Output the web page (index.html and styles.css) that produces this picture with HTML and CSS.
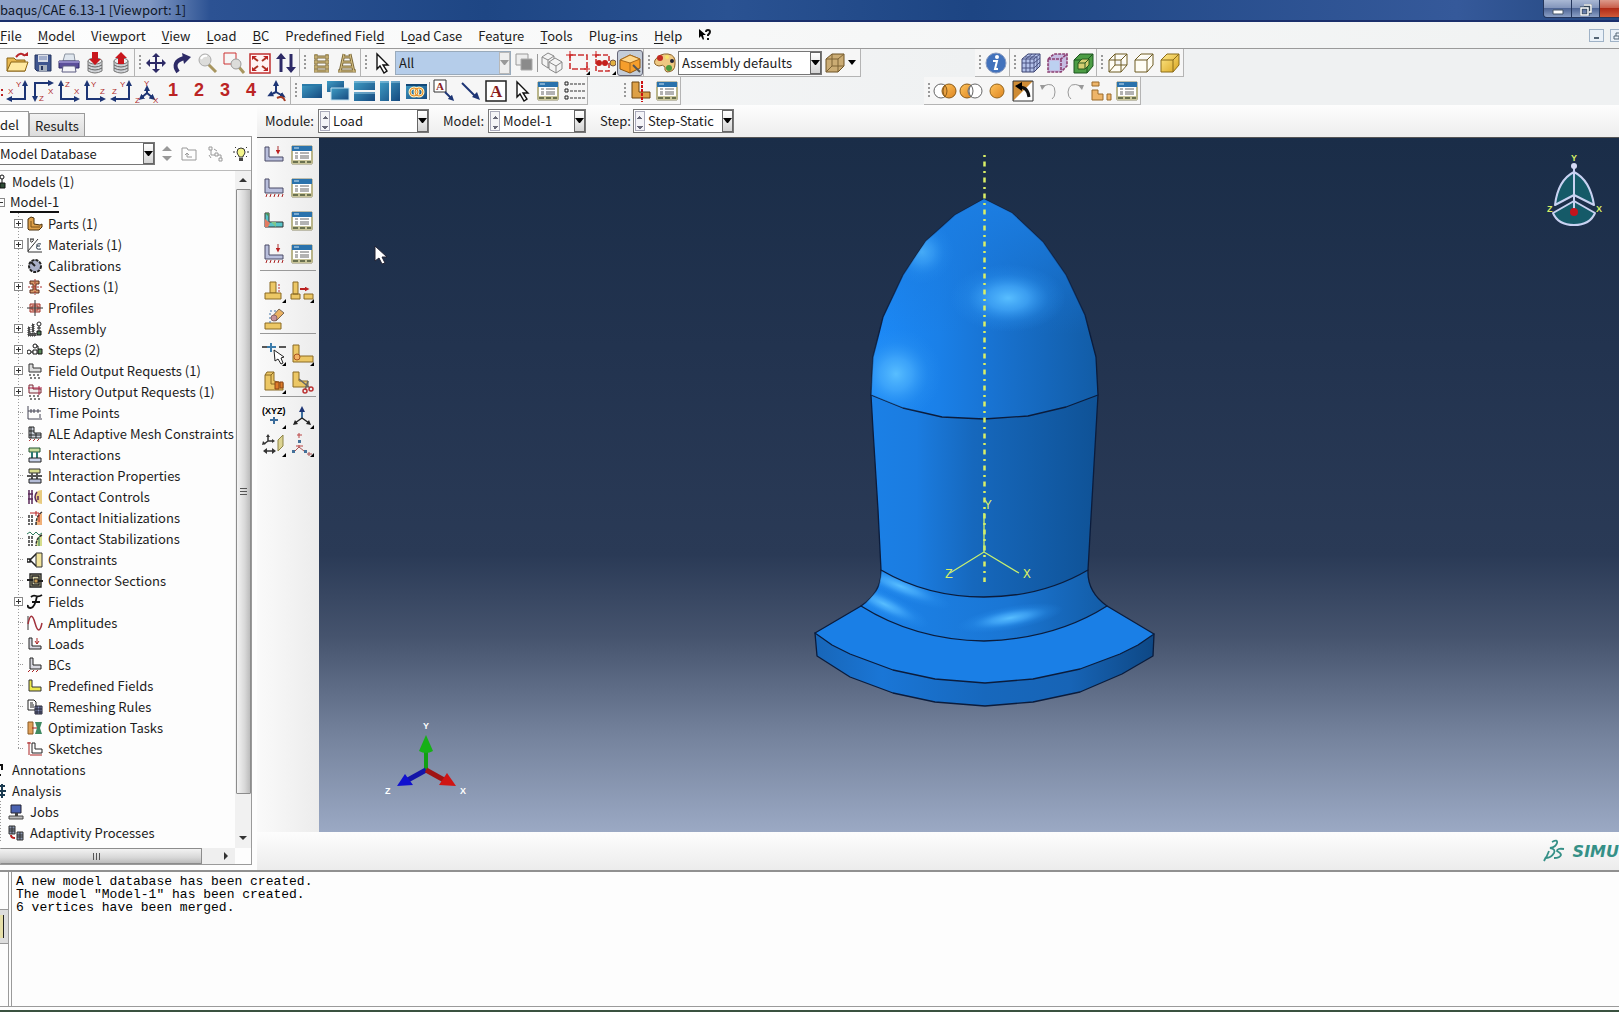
FILE: index.html
```html
<!DOCTYPE html>
<html lang="en">
<head>
  <meta charset="UTF-8" />
  <title>Abaqus/CAE 6.13-1 [Viewport: 1]</title>
  <meta name="viewport" content="width=device-width, initial-scale=1.0" />
  <link rel="stylesheet" href="styles.css">
</head>
<body>
<!-- shared paints and arrow heads -->
<svg class="sprite" aria-hidden="true">
  <defs>
    <linearGradient id="gBlue" x1="0" y1="0" x2="1" y2="1"><stop offset="0" stop-color="#3f9cc4"/><stop offset="1" stop-color="#164a80"/></linearGradient>
    <linearGradient id="gGold" x1="0" y1="0" x2="1" y2="1"><stop offset="0" stop-color="#ffe98a"/><stop offset="1" stop-color="#d9a520"/></linearGradient>
    <linearGradient id="gOrange" x1="0" y1="0" x2="1" y2="1"><stop offset="0" stop-color="#ffc45c"/><stop offset="1" stop-color="#dd8420"/></linearGradient>
    <marker id="mBlue" viewBox="0 0 6 6" refX="3" refY="3" markerWidth="6" markerHeight="6" markerUnits="userSpaceOnUse" orient="auto-start-reverse"><path d="M0 0L6 3L0 6z" fill="#1d3575"/></marker>
    <marker id="mRed" viewBox="0 0 6 6" refX="3" refY="3" markerWidth="5" markerHeight="5" markerUnits="userSpaceOnUse" orient="auto-start-reverse"><path d="M0 0L6 3L0 6z" fill="#b22"/></marker>
  </defs>
</svg>
<!-- icon sprite -->
<svg class="icons" aria-hidden="true">
  <symbol id="open" viewBox="0 0 24 24"><path d="M2 20V7h7l2 2h9v11z" fill="#e8b850" stroke="#8a6416"/><path d="M2 20L6 11H23L20 20z" fill="#ffe9a0" stroke="#8a6416"/><path d="M11 6Q16 0 20 5" fill="none" stroke="#b8252a" stroke-width="2"/><path d="M17 5h6v-4z" fill="#b8252a"/></symbol>
  <symbol id="save" viewBox="0 0 24 24"><path d="M4 4H20V20H6L4 18z" fill="#3e548e" stroke="#24345f"/><path d="M7 4h10v7H7z" fill="#d9dde6"/><path d="M8 6h8M8 8h8" stroke="#6b7fb0"/><path d="M8 14h8v6H8z" fill="#a6afbd"/><path d="M10 15h2v4h-2z" fill="#24345f"/></symbol>
  <symbol id="print" viewBox="0 0 24 24"><path d="M6 10L8 3H17L18 10z" fill="#dfe6ee" stroke="#8b93a0"/><path d="M2 10h20v7H2z" fill="#5b4e9a" stroke="#2f2a66"/><path d="M2 10h20v2H2z" fill="#8e84c4"/><path d="M6 15h12l1 6H5z" fill="#f4f4f8" stroke="#5b5b80"/></symbol>
  <symbol id="dbdown" viewBox="0 0 24 24"><path d="M5 10v10q7 4 14 0V10z" fill="#cfd2d6" stroke="#777"/><path d="M5 14q7 4 14 0M5 17q7 4 14 0" fill="none" stroke="#666"/><ellipse cx="12" cy="10" rx="7" ry="3" fill="#eceeee" stroke="#777"/><path d="M9 1h6v7h3l-6 6-6-6h3z" fill="#c8161d"/></symbol>
  <symbol id="dbup" viewBox="0 0 24 24"><path d="M5 10v10q7 4 14 0V10z" fill="#cfd2d6" stroke="#777"/><path d="M5 14q7 4 14 0M5 17q7 4 14 0" fill="none" stroke="#666"/><ellipse cx="12" cy="10" rx="7" ry="3" fill="#eceeee" stroke="#777"/><path d="M9 13h6V7h3l-6-6-6 6h3z" fill="#c8161d"/></symbol>
  <symbol id="pan" viewBox="0 0 24 24"><path d="M12 4V20M4 12H20" stroke="#2d2a66" stroke-width="2"/><path d="M12 2l4 4H8zM12 22l4-4H8zM2 12l4-4v8zM22 12l-4-4v8z" fill="#2d2a66"/></symbol>
  <symbol id="rotate" viewBox="0 0 24 24"><path d="M8 21Q1 11 14 7" fill="none" stroke="#2d2a66" stroke-width="4"/><path d="M12 2L21 6L14 13z" fill="#2d2a66"/></symbol>
  <symbol id="magnify" viewBox="0 0 24 24"><path d="M12 13L20 21" stroke="#a89660" stroke-width="3"/><circle cx="9" cy="9" r="6" fill="#dcdcda" stroke="#aaa"/><path d="M5 8q2-4 6-3" stroke="#fff" stroke-width="2" fill="none"/></symbol>
  <symbol id="boxzoom" viewBox="0 0 24 24"><path d="M2 2h12v11H2z" fill="none" stroke="#c33"/><path d="M16 15L22 22" stroke="#a89660" stroke-width="3"/><circle cx="14" cy="13" r="5" fill="#dcdcda" stroke="#999"/></symbol>
  <symbol id="fit" viewBox="0 0 24 24"><path d="M2 3h20v19H2z" fill="#fff4f4" stroke="#c03030" stroke-width="1.5"/><path d="M10 10L6 7M14 10l4-3M10 15l-4 3M14 15l4 3" stroke="#a32" stroke-width="2"/><path d="M4 5h5L4 9zM20 5v4l-5-4zM4 20v-4l5 4zM20 20h-5l5-4z" fill="#b22"/></symbol>
  <symbol id="cycle" viewBox="0 0 24 24"><path d="M7 5V21M17 3V19" stroke="#2d2a66" stroke-width="3"/><path d="M7 2l5 6H2zM17 22l5-6H12z" fill="#2d2a66"/></symbol>
  <symbol id="parallel" viewBox="0 0 24 24"><path d="M7 3V21M18 3V21M5 6h15M5 11h15M5 16h15M5 20h15" stroke="#7a683a" stroke-width="3"/><path d="M7 3V21M18 3V21M5 6h15M5 11h15M5 16h15M5 20h15" stroke="#d9c284"/></symbol>
  <symbol id="perspective" viewBox="0 0 24 24"><path d="M9 3L5 21M15 3L19 21M8 6h8M7 11h10M6 16h12M3 20h18" stroke="#7a683a" stroke-width="3"/><path d="M9 3L5 21M15 3L19 21M8 6h8M7 11h10M6 16h12M3 20h18" stroke="#d9c284"/></symbol>
  <symbol id="cursor" viewBox="0 0 24 24"><path d="M7 3V18L10 15L14 22L17 20L13 14H18z" fill="#fff" stroke="#111" stroke-width="1.4"/></symbol>
  <symbol id="stack" viewBox="0 0 24 24"><path d="M4 3h12v11H4z" fill="#eee" stroke="#999"/><path d="M9 8h11v11H9z" fill="#8b8b8b" stroke="#aaa"/></symbol>
  <symbol id="wirecubes" viewBox="0 0 24 24"><g fill="#f4f4f4" stroke="#888"><path d="M2 6l6-4 6 3v8l-6 4-6-4z"/><path d="M2 6l6 3 6-4M8 9v8"/><path d="M9 11l6-4 7 4v7l-6 4-7-4z"/><path d="M9 11l7 4 6-4M16 15v7"/></g></symbol>
  <symbol id="selbox" viewBox="0 0 24 24"><path d="M4 4H21V18H4z" fill="none" stroke="#c33" stroke-width="1.6" stroke-dasharray="6 2"/><path d="M0 4h7M4 0v7M18 18h6M21 15v6" stroke="#c22"/><path d="M24 20v4h-4z"/></symbol>
  <symbol id="seldots" viewBox="0 0 24 24"><path d="M4 4H17V20H4z" fill="none" stroke="#c33" stroke-width="1.6" stroke-dasharray="5 2"/><path d="M0 4h7M4 0v7" stroke="#c22"/><circle cx="7" cy="12" r="3" fill="#c4201c"/><circle cx="13" cy="12" r="3" fill="#c4201c"/><circle cx="21" cy="12" r="3" fill="#e2b040" stroke="#754"/><path d="M24 20v4h-4z"/></symbol>
  <symbol id="solidcube" viewBox="0 0 24 24"><path d="M2 9L12 4L22 8V17L12 22L2 18z" fill="#f59e2c" stroke="#8c5510"/><path d="M2 9L12 12L22 8L12 4z" fill="#ffd68a" stroke="#a9691a"/><path d="M12 12V22" stroke="#a9691a"/><path d="M15 14l7 7" stroke="#555" stroke-width="2"/></symbol>
  <symbol id="palette" viewBox="0 0 24 24"><path d="M2 9Q7 2 15 3T22 13Q22 21 14 21Q11 20 12 16Q10 13 6 15Q0 14 2 9z" fill="#efc882" stroke="#8a6228"/><circle cx="7" cy="7" r="3" fill="#c22a22"/><circle cx="14" cy="6" r="2" fill="#f7e36a"/><circle cx="19" cy="10" r="2" fill="#223"/><circle cx="16" cy="17" r="3" fill="#4b9a3c"/></symbol>
  <symbol id="tancube" viewBox="0 0 24 24"><path d="M3 8L9 3H21V15L15 21H3z" fill="#cbac74" stroke="#6d5325"/><path d="M3 8H15L21 3M15 8V21M9 3V15H21M9 15L3 21" fill="none" stroke="#7d6335"/></symbol>
  <symbol id="info" viewBox="0 0 24 24"><circle cx="12" cy="12" r="10" fill="#4272bc" stroke="#8a9cc0"/><circle cx="13" cy="6" r="2" fill="#fff"/><path d="M9 10h4l-2 8h3" fill="none" stroke="#fff" stroke-width="2"/></symbol>
  <symbol id="meshcube" viewBox="0 0 24 24"><path d="M3 8L9 3H21V15L15 21H3z" fill="#b4c2ea" stroke="#39406e"/><path d="M3 8H15L21 3M15 8V21M7 8V21M11 8V21M3 12H15L21 7M3 17H15L21 11M6 6H18V18M7 8l6-5M11 8l6-5" fill="none" stroke="#4a5282"/></symbol>
  <symbol id="nodecube" viewBox="0 0 24 24"><path d="M3 8L9 3H22V15L16 21H3z" fill="#c6bce2" stroke="#8c3f72" stroke-dasharray="3 1" stroke-width="1.6"/><path d="M5 10h9v9H5z" fill="#bcd0f0"/><path d="M3 8H16L22 3M16 8V21" fill="none" stroke="#8c3f72" stroke-dasharray="3 1" stroke-width="1.6"/></symbol>
  <symbol id="greencube" viewBox="0 0 24 24"><path d="M3 9L9 3H22V15L16 22H3z" fill="#4c9d45" stroke="#1c5420"/><path d="M3 9H16L22 3M16 9V22" fill="none" stroke="#1c5420"/><path d="M7 12L11 8H18V14L14 18H7z" fill="#d5cf72" stroke="#2a5a1e"/><path d="M7 12h7v6M14 12l4-4" fill="none" stroke="#2a5a1e"/></symbol>
  <symbol id="wirecube" viewBox="0 0 24 24"><path d="M3 9L9 3H21V14L15 21H3zM3 9H15L21 3M15 9V21M9 3V14H21M9 14L3 21" fill="#fffdf4" stroke="#6d5a22"/></symbol>
  <symbol id="hidcube" viewBox="0 0 24 24"><path d="M3 9L9 3H21V14L15 21H3zM3 9H15L21 3M15 9V21" fill="#fffdf4" stroke="#6d5a22"/></symbol>
  <symbol id="goldcube" viewBox="0 0 24 24"><path d="M3 9L9 3H21V14L15 21H3z" fill="url(#gGold)" stroke="#8a6c1a"/><path d="M3 9H15L21 3M15 9V21" fill="none" stroke="#8a6c1a"/></symbol>

  <symbol id="vcut" viewBox="0 0 4 24"><path d="M1 10h2v2H1zM1 15h2v2H1z" fill="#b22"/></symbol>
  <symbol id="v1" viewBox="0 0 24 24"><path d="M20 4V20H4" class="axis"/><text x="11" y="8" class="axl">Y</text><text x="3" y="15" class="axl">X</text></symbol>
  <symbol id="v2" viewBox="0 0 24 24"><path d="M20 4H4V20" class="axis"/><text x="17" y="15" class="axl">X</text><text x="8" y="22" class="axl">Z</text></symbol>
  <symbol id="v3" viewBox="0 0 24 24"><path d="M4 4V20H20" class="axis"/><text x="8" y="8" class="axl">Z</text><text x="17" y="15" class="axl">X</text></symbol>
  <symbol id="v4" viewBox="0 0 24 24"><path d="M4 4V20H20" class="axis"/><text x="8" y="8" class="axl">Y</text><text x="17" y="15" class="axl">Z</text></symbol>
  <symbol id="v5" viewBox="0 0 24 24"><path d="M20 4V20H4" class="axis"/><text x="11" y="8" class="axl">Y</text><text x="3" y="15" class="axl">Z</text></symbol>
  <symbol id="v6" viewBox="0 0 24 24"><path d="M12 14V9" class="axis end"/><path d="M12 14L6 19" class="axis end"/><path d="M12 14L18 19" class="axis end"/><text x="9" y="7" class="axl">Y</text><text x="0" y="24" class="axl">Z</text><text x="18" y="24" class="axl">X</text></symbol>
  <symbol id="vrot" viewBox="0 0 24 24"><path d="M11 13V4" class="axis end"/><path d="M11 13L5 16" class="axis end"/><path d="M11 13L18 17" class="axis end"/><path d="M12 19q6-3 8 3" fill="none" stroke="#a43a22" stroke-width="2"/></symbol>

  <symbol id="win" viewBox="0 0 24 24"><path d="M2 5h20v14H2z" fill="url(#gBlue)"/><path d="M2 5h20v2H2z" fill="#2a7aa8"/></symbol>
  <symbol id="wincasc" viewBox="0 0 24 24"><path d="M1 2h17v11H1z" fill="url(#gBlue)"/><path d="M5 9h18v12H5z" fill="url(#gBlue)" stroke="#bfe0f0"/></symbol>
  <symbol id="winhor" viewBox="0 0 24 24"><path d="M2 2h21v9H2zM2 13h21v9H2z" fill="url(#gBlue)"/><path d="M2 3h21M2 14h21" stroke="#9ccbe4"/></symbol>
  <symbol id="winver" viewBox="0 0 24 24"><path d="M2 2h9v20H2zM13 2h9v20h-9z" fill="url(#gBlue)"/><path d="M2 3h9M13 3h9" stroke="#9ccbe4"/></symbol>
  <symbol id="winlink" viewBox="0 0 24 24"><path d="M2 5h21v15H2z" fill="url(#gBlue)"/><path d="M2 5h21v2H2z" fill="#114877"/><g fill="none" stroke="#fff0c0" stroke-width="3"><circle cx="10" cy="13" r="4"/><circle cx="15" cy="13" r="4"/></g><g fill="none" stroke="#e58a22"><circle cx="10" cy="13" r="4"/><circle cx="15" cy="13" r="4"/></g></symbol>
  <symbol id="textarrow" viewBox="0 0 24 24"><path d="M2 1h12v12H2z" fill="#fff" stroke="#333"/><text x="4" y="11" class="serif" font-size="11">A</text><path d="M13 13L20 20" class="axis end"/></symbol>
  <symbol id="arrow" viewBox="0 0 24 24"><path d="M4 4L18 18" stroke="#1d3575" stroke-width="2"/><path d="M22 21l-8-3 5-5z" fill="#1d3575"/></symbol>
  <symbol id="text" viewBox="0 0 24 24"><path d="M2 2h20v20H2z" fill="#fff" stroke="#222" stroke-width="1.5"/><text x="6" y="18" class="serif" font-size="17">A</text></symbol>
  <symbol id="manager" viewBox="0 0 24 24"><path d="M2 3h20v18H2z" fill="#fff" stroke="#8b8868"/><path d="M2 3h20v5H2z" fill="#2a72ac"/><path d="M4 5h5" stroke="#cfe5f4"/><path d="M2 17h20v4H2z" fill="#c9c59a"/><path d="M3 19h5M10 19h5M17 19h4" stroke="#6a7150" stroke-width="2"/><path d="M5 10h3M5 13h3M5 15h3M10 10h9M10 13h9M10 15h9" stroke="#666"/><path d="M2 8v12M22 8v12" stroke="#b9b58a" stroke-width="2"/></symbol>
  <symbol id="list" viewBox="0 0 24 24"><path d="M3 3h3v3H3zM3 10h3v3H3zM3 17h3v3H3z" fill="none" stroke="#222"/><path d="M8 5h15M8 12h15M8 19h15" stroke="#333" stroke-dasharray="3 1"/></symbol>
  <symbol id="partcut" viewBox="0 0 24 24"><path d="M3 3h7v10h11v6H3z" fill="#dda047" stroke="#6d4510"/><path d="M13 2V23" stroke="#c11" stroke-width="2" stroke-dasharray="3 1"/></symbol>
  <symbol id="unite" viewBox="0 0 24 24"><circle cx="8" cy="12" r="7" fill="#fff" stroke="#666"/><circle cx="16" cy="12" r="7" fill="url(#gOrange)" stroke="#8a5a18"/><path d="M12 6Q16 12 12 18Q8 12 12 6z" fill="#e9a040" stroke="#8a5a18"/></symbol>
  <symbol id="subtract" viewBox="0 0 24 24"><circle cx="8" cy="12" r="7" fill="url(#gOrange)" stroke="#8a5a18"/><circle cx="16" cy="12" r="7" fill="#fff" stroke="#666"/><path d="M12 6Q16 12 12 18Q8 12 12 6z" fill="#fff" stroke="#666"/></symbol>
  <symbol id="disk" viewBox="0 0 24 24"><circle cx="12" cy="12" r="7" fill="url(#gOrange)" stroke="#94641c"/></symbol>
  <symbol id="swap" viewBox="0 0 24 24"><path d="M2 2h20v20H2z" fill="#fff"/><path d="M2 2h20L2 22z" fill="#cf8c35"/><path d="M2 2h20v20H2z" fill="none" stroke="#333"/><path d="M8 8q9 0 10 10" fill="none" stroke="#111" stroke-width="3"/><path d="M4 7l7-4v9z"/></symbol>
  <symbol id="undo" viewBox="0 0 24 24"><path d="M6 7Q18 2 18 13Q18 18 15 20" fill="none" stroke="#999"/><path d="M3 6h6l-4 5z" fill="#999"/></symbol>
  <symbol id="redo" viewBox="0 0 24 24"><path d="M18 7Q6 2 5 13Q5 18 8 20" fill="none" stroke="#999"/><path d="M21 6h-6l4 5z" fill="#999"/></symbol>
  <symbol id="parts3" viewBox="0 0 24 24"><g fill="#eeb56a" stroke="#9a6a2a"><path d="M3 3h7v4H3z"/><path d="M3 11h6v4h5v6H3z"/><path d="M18 15h4v6h-4z"/></g></symbol>

  <symbol id="tload" viewBox="0 0 24 24"><path d="M3 4h4v10h14v4H3z" class="part"/><path d="M16 3V9" stroke="#a33" marker-end="url(#mRed)"/></symbol>
  <symbol id="tbc" viewBox="0 0 24 24"><path d="M3 3h4v9h14v5H3z" class="part"/><path d="M4 21l1-3M8 21l1-3M12 21l1-3M16 21l1-3M20 21l1-3" stroke="#a22"/></symbol>
  <symbol id="tfield" viewBox="0 0 24 24"><path d="M3 4h4v9h14v5H3z" fill="#58c4c8" stroke="#333"/><path d="M3 10L8 14L6 18H3z" fill="#e37b62"/><path d="M3 4h4v4z" fill="#4d8f5a"/><path d="M9 13h5v5z" fill="#7fc68a"/></symbol>
  <symbol id="tcase" viewBox="0 0 24 24"><path d="M3 3h4v10h14v4H3z" class="part"/><path d="M16 2V8" stroke="#a33" marker-end="url(#mRed)"/><path d="M4 21l1-3M8 21l1-3M12 21l1-3M16 21l1-3M20 21l1-3" stroke="#a22"/></symbol>
  <symbol id="tpart" viewBox="0 0 24 24"><path d="M8 3h6v11H8z" class="gold"/><path d="M3 14h16v6H3z" class="gold"/><path d="M17 5v9" stroke="#b33" stroke-dasharray="2 1"/><path d="M24 20v4h-4z"/></symbol>
  <symbol id="tmove" viewBox="0 0 24 24"><path d="M3 3h5v12H3zM1 15h9v5H1zM14 15h9v5h-9z" class="gold"/><path d="M10 10H17" stroke="#b22" stroke-width="2" marker-end="url(#mRed)"/><path d="M24 20v4h-4z"/></symbol>
  <symbol id="terase" viewBox="0 0 24 24"><path d="M3 16h16v6H3z" class="gold"/><path d="M8 16V4h6" fill="none" stroke="#47a" stroke-dasharray="2 2"/><path d="M9 11L17 2L22 6L14 14z" fill="#eab262" stroke="#765"/><circle cx="12" cy="11" r="3" fill="#c5919a" stroke="#866"/></symbol>
  <symbol id="tpick" viewBox="0 0 24 24"><path d="M0 5h6M17 5h7" stroke="#222" stroke-width="1.5"/><path d="M9 1v9M5 5h9" stroke="#3b7cab" stroke-width="2"/><path d="M12 8l1 11 3-2 3 5 2-1-2-5 3-1z" fill="#fff" stroke="#222"/><path d="M24 20v4h-4z"/></symbol>
  <symbol id="thole" viewBox="0 0 24 24"><path d="M3 3h6v11h14v6H3z" class="gold"/><circle cx="7" cy="15" r="3" fill="#f5b264" stroke="#a52"/><path d="M24 20v4h-4z"/></symbol>
  <symbol id="tfill" viewBox="0 0 24 24"><path d="M3 5l2-3h7v9l9 2v7H3z" class="gold"/><path d="M3 5h6v9h5M9 5l3-3" fill="none" stroke="#8a6a24"/><path d="M13 12h4v7h-4zM18 12h3v6h-3z" fill="#dd7d2a" stroke="#8a4516"/><path d="M24 20v4h-4z"/></symbol>
  <symbol id="tcut" viewBox="0 0 24 24"><path d="M3 2h6v9h9v6H3z" class="gold"/><path d="M9 9L20 18M18 11L15 20" stroke="#666" stroke-width="1.5"/><g fill="none" stroke="#b33" stroke-width="1.5"><circle cx="15" cy="21" r="2"/><circle cx="21" cy="19" r="2"/></g></symbol>
  <symbol id="txyz" viewBox="0 0 24 24"><text x="0" y="9" font-size="9" font-weight="700">(XYZ)</text><path d="M12 12v7M8 15h8" stroke="#3b6c9b" stroke-width="2"/><path d="M24 20v4h-4z"/></symbol>
  <symbol id="ttriad" viewBox="0 0 24 24"><path d="M12 14V4" stroke="#3d6f9e" stroke-width="2" marker-end="url(#mBlue)"/><path d="M12 13L5 18M12 13L19 18" stroke="#222" stroke-width="1.5"/><path d="M3 20l5-1-3-4zM21 20l-5-1 3-4z" fill="#222"/><path d="M24 20v4h-4z"/></symbol>
  <symbol id="tplane" viewBox="0 0 24 24"><path d="M6 8V3M6 8L2 11M6 8h5M4 18h7" stroke="#333" stroke-width="1.5"/><path d="M1 18l4-3v6zM14 18l-4-3v6zM6 1l2 3H4zM13 8l-3-2v4zM0 12l1-4 3 3z" fill="#333"/><path d="M16 7L21 2V13L16 18z" fill="#dcd391" stroke="#8d8446"/><path d="M24 20v4h-4z"/></symbol>
  <symbol id="tcsys" viewBox="0 0 24 24"><path d="M9 0v5M7 2h5M9 12v3M6 13h7" stroke="#b44"/><path d="M8 7h3v3H8zM2 17h3v3H2zM14 17h3v3h-3z" fill="#44719a"/><path d="M5 18l4-4 5 4M17 21h5M19 19v4" stroke="#a55" fill="none"/><path d="M24 20v4h-4z"/></symbol>

  <symbol id="bulb" viewBox="0 0 18 18"><path d="M5 7a4 4 0 118 0q0 2-2 4v1H7v-1Q5 9 5 7z" fill="#f4f58a" stroke="#333"/><path d="M7 13h4v3H7z" fill="#444"/><path d="M1 7h2M15 7h2M3 2l1 1M15 2l-1 1M3 12l1-1M15 12l-1-1" stroke="#333"/></symbol>
  <symbol id="folderup" viewBox="0 0 18 18"><path d="M2 5V3h5l1 2h8v10H2z" fill="none" stroke="#999"/><path d="M7 12V8M5 10l2-2 2 2M7 12h5" fill="none" stroke="#999"/></symbol>
  <symbol id="nodes" viewBox="0 0 18 18"><g fill="none" stroke="#999"><path d="M3 2h3v3H3zM9 8h3v3H9zM13 13h3v3h-3zM5 5v5h4M12 10h3v3M8 4l3 2M3 10l2 3"/></g></symbol>

  <symbol id="t-part" viewBox="0 0 16 16"><path d="M1 3l3-2 3 1v6l6 1 2-1v3l-3 3H2l-1-1z" fill="#dda04a" stroke="#4a300c"/><path d="M4 5v6h9" fill="none" stroke="#7a5018"/></symbol>
  <symbol id="t-mat" viewBox="0 0 16 16"><path d="M1 1v14h14M1 14L11 2" fill="none" stroke="#333"/><path d="M3 2h4M4 2q-1 4 1 3t1-3" fill="none" stroke="#333"/><path d="M14 7q-5-1-4 2q-2 4 4 3M10 9h3" fill="none" stroke="#234"/></symbol>
  <symbol id="t-cal" viewBox="0 0 16 16"><circle cx="8" cy="8" r="6" fill="#aab0c8" stroke="#222" stroke-width="2" stroke-dasharray="3 1"/><path d="M4 4l4 4" stroke="#222" stroke-width="2"/></symbol>
  <symbol id="t-sec" viewBox="0 0 16 16"><path d="M3 2h9v3H9v6h3v3H3v-3h3V5H3z" fill="#d69a68" stroke="#5a2a1a"/><path d="M1 8h14M8 0v16" stroke="#a33" stroke-dasharray="2 1"/></symbol>
  <symbol id="t-prof" viewBox="0 0 16 16"><path d="M3 4h10v8H3zM5 6h6v4H5z" fill="#e9bcae" stroke="#a2322a"/><path d="M8 0v16M0 8h16" stroke="#333"/></symbol>
  <symbol id="t-asm" viewBox="0 0 16 16"><path d="M1 6h2v6h6v3H1zM5 3h2v8H5z" fill="#555" stroke="#333" stroke-dasharray="1 1"/><circle cx="12" cy="3" r="2" fill="#fff" stroke="#222"/><path d="M12 5v5M10 7h4" stroke="#222"/><path d="M10 10h4v4h-4z" fill="#527a5a" stroke="#111"/></symbol>
  <symbol id="t-step" viewBox="0 0 16 16"><circle cx="2" cy="10" r="2" fill="#fff" stroke="#111"/><path d="M4 10h3M9 4h2v3" fill="none" stroke="#111"/><circle cx="8" cy="4" r="2" fill="#fff" stroke="#111"/><path d="M6 8h4v4H6z" fill="#fff" stroke="#111"/><path d="M11 7h4v5h-4z" fill="#5c8a5c" stroke="#111"/></symbol>
  <symbol id="t-fout" viewBox="0 0 16 16"><path d="M2 1h4v4h8v4H2z" fill="#ddd" stroke="#333"/><path d="M2 12h12M3 15h10" stroke="#555" stroke-width="1.5" stroke-dasharray="2 2"/></symbol>
  <symbol id="t-hout" viewBox="0 0 16 16"><path d="M2 1h4v4h8v4H2z" fill="#eee" stroke="#7a2430"/><path d="M1 4h14M12 2v9" stroke="#a24"/><path d="M2 12h12M3 15h10" stroke="#555" stroke-width="1.5" stroke-dasharray="2 2"/></symbol>
  <symbol id="t-time" viewBox="0 0 16 16"><path d="M1 1v13h14M1 6h13M4 4v4M7 4v4M11 4v4M13 9v4" fill="none" stroke="#445"/></symbol>
  <symbol id="t-ale" viewBox="0 0 16 16"><path d="M2 1h5v6h7v5H2zM2 5h5M4 1v11M2 9h12M9 7v5" fill="#cdd2dc" stroke="#222"/><path d="M2 15l2-2M6 15l2-2M10 15l2-2" stroke="#a33"/></symbol>
  <symbol id="t-int" viewBox="0 0 16 16"><path d="M2 1h11v4H2z" fill="#c5da9c" stroke="#253"/><path d="M5 5v6M10 5v6" stroke="#2a7a72" stroke-width="2"/><path d="M2 11h12v4H2z" fill="#c9d3ea" stroke="#222"/></symbol>
  <symbol id="t-intp" viewBox="0 0 16 16"><path d="M2 1h11v4H2z" fill="#d8dc8c" stroke="#333"/><path d="M5 5v6M10 5v6M0 8h15" stroke="#555" stroke-width="2"/><path d="M2 11h12v4H2z" fill="#b4bcd6" stroke="#222"/></symbol>
  <symbol id="t-cc" viewBox="0 0 16 16"><path d="M15 1q-7 0-7 7t7 7z" fill="#e8cb80"/><path d="M2 1v14M5 1v14M1 5h5M1 10h5M10 3q-4 5 0 10M11 7v4" fill="none" stroke="#5a2a5a" stroke-width="1.5"/></symbol>
  <symbol id="t-ci" viewBox="0 0 16 16"><path d="M15 3q-7 3-6 12h6z" fill="#f0b078"/><path d="M2 5v10M5 5v10M15 2q-6 4-6 13" fill="none" stroke="#333" stroke-width="1.5" stroke-dasharray="3 1"/><path d="M3 3h9M9 1v5M12 3v9" stroke="#b22"/></symbol>
  <symbol id="t-cs" viewBox="0 0 16 16"><path d="M15 3q-7 3-6 12h6z" fill="#d6dd8c"/><path d="M2 5v10M5 5v10M15 4q-6 3-6 11" fill="none" stroke="#333" stroke-width="1.5" stroke-dasharray="3 1"/><path d="M0 3l3-2 3 3 3-3 3 3 3-2M12 6v9" fill="none" stroke="#2a7a5a"/></symbol>
  <symbol id="t-con" viewBox="0 0 16 16"><path d="M9 1h6v14H9z" fill="#f2e49c" stroke="#333"/><path d="M9 2L3 8l6 6M0 7h3v3H0z" fill="none" stroke="#222" stroke-width="1.5"/></symbol>
  <symbol id="t-csec" viewBox="0 0 16 16"><path d="M3 1h11v13H3zM5 3h7v9H5z" fill="#d5cfa4" stroke="#222" stroke-width="1.4"/><path d="M0 7h6M10 8h6" stroke="#222" stroke-width="2"/><path d="M7 6h4v4H7z" fill="#c99a50" stroke="#222"/></symbol>
  <symbol id="t-field" viewBox="0 0 16 16"><path d="M4 3q2-2 5-1t6-1M10 2Q8 13 4 14q-4 0-3-3M5 8h8" fill="none" stroke="#111" stroke-width="1.8"/></symbol>
  <symbol id="t-amp" viewBox="0 0 16 16"><path d="M1 1v14" stroke="#333"/><path d="M1 9Q4-6 8 8T15 8" fill="none" stroke="#a2323c" stroke-width="1.5"/></symbol>
  <symbol id="t-load" viewBox="0 0 16 16"><path d="M2 2h3v8h9v3H2z" fill="#d8d8e0" stroke="#222"/><path d="M10 2v6M8 5l2 3 2-3" fill="none" stroke="#a22"/></symbol>
  <symbol id="t-bc" viewBox="0 0 16 16"><path d="M3 1h3v7h8v4H3z" fill="#d8d8e0" stroke="#222"/><path d="M1 15l2-2M5 15l2-2M9 15l2-2" stroke="#a22"/></symbol>
  <symbol id="t-pf" viewBox="0 0 16 16"><path d="M2 2h3v7h9v4H2z" fill="#ece84c" stroke="#333"/></symbol>
  <symbol id="t-rem" viewBox="0 0 16 16"><path d="M1 1h6l2 2v8H1z" fill="#fff" stroke="#222"/><path d="M3 4h3M3 6h4M3 8h4" stroke="#222"/><path d="M8 7h7v8H8zM10 7v8M13 7v8M8 10h7M8 13h7" fill="#8a96c0" stroke="#223"/></symbol>
  <symbol id="t-opt" viewBox="0 0 16 16"><path d="M1 2h5v12H1z" fill="#e0a05a" stroke="#8a5a22"/><path d="M8 2h7l-2 6 2 6H8l2-6z" fill="#3f8a62"/><path d="M5 8h5" stroke="#a22"/></symbol>
  <symbol id="t-sk" viewBox="0 0 16 16"><path d="M5 2h3v6h7v4H5z" fill="#fff" stroke="#222"/><path d="M2 1v13M0 2h4M3 14h12" stroke="#a22"/></symbol>
  <symbol id="t-job" viewBox="0 0 16 16"><path d="M3 1h10v8H3z" fill="#4a62b0" stroke="#223"/><path d="M7 9h3v3H7z" fill="#444"/><path d="M1 12h14v3H1z" fill="#bbb" stroke="#444"/></symbol>
  <symbol id="t-adp" viewBox="0 0 16 16"><path d="M1 1h6v8H1zM1 4h6M1 6h6M4 1v8M9 7h6v8H9zM9 10h6M9 12h6M12 7v8" fill="#8a96b0" stroke="#333"/><path d="M3 10q0 3 4 3" fill="none" stroke="#b22" stroke-width="2"/></symbol>
  <symbol id="t-db" viewBox="0 0 6 16"><circle cx="2" cy="3" r="2" fill="#fff" stroke="#111"/><path d="M2 5v5" stroke="#111"/><path d="M0 9h5v5H0z" fill="#2d4a35" stroke="#111"/></symbol>
  <symbol id="t-ann" viewBox="0 0 6 16"><path d="M0 3h2v5M0 13h1" fill="none" stroke="#111" stroke-width="2"/></symbol>
  <symbol id="t-ana" viewBox="0 0 6 16"><path d="M0 3h5M0 8h6M0 12h5M2 1v14" stroke="#1a3a50" stroke-width="2"/></symbol>
</svg>

<div class="app">
  <header class="titlebar">
    <h1>baqus/CAE 6.13-1 [Viewport: 1]</h1>
    <div class="winbtns">
      <button aria-label="Minimize"><svg width="12" height="12"><path d="M1 6h10v4H1z" fill="#fff" stroke="#456"/></svg></button>
      <button aria-label="Restore"><svg width="12" height="12"><path d="M4 1h7v7H9M1 4h7v7H1z" fill="none" stroke="#345" stroke-width="3"/><path d="M4 1h7v7H9M1 4h7v7H1z" fill="none" stroke="#fff" stroke-width="1.5"/></svg></button>
      <button class="close" aria-label="Close"></button>
    </div>
  </header>

  <nav class="menubar">
    <button><u>F</u>ile</button>
    <button><u>M</u>odel</button>
    <button>Vie<u>w</u>port</button>
    <button><u>V</u>iew</button>
    <button><u>L</u>oad</button>
    <button><u>B</u>C</button>
    <button>Predefined Fiel<u>d</u></button>
    <button>L<u>o</u>ad Case</button>
    <button>Feat<u>u</u>re</button>
    <button><u>T</u>ools</button>
    <button>Plu<u>g</u>-ins</button>
    <button><u>H</u>elp</button>
    <button aria-label="What's this"><svg width="13" height="12"><path d="M1 0v9l2-2 2 4 1-1-1-4h3z"/><path d="M8 3q0-2 2-2t2 2q0 1-2 3v1M10 9v2" fill="none" stroke="#111" stroke-width="2"/></svg></button>
    <div class="mdi">
      <button aria-label="Minimize viewport"><svg width="13" height="11"><path d="M4 8h5" stroke="#567" stroke-width="2"/></svg></button>
      <button class="cut" aria-label="Restore viewport"><svg width="8" height="11"><path d="M3 6h5v3H3zM5 6V3h3" fill="none" stroke="#567"/></svg></button>
    </div>
  </nav>

  <div class="toolbar">
    <div class="group first">
      <button aria-label="Open"><svg><use href="#open"/></svg></button>
      <button aria-label="Save"><svg><use href="#save"/></svg></button>
      <button aria-label="Print"><svg><use href="#print"/></svg></button>
      <button aria-label="Load session"><svg><use href="#dbdown"/></svg></button>
      <button aria-label="Save session"><svg><use href="#dbup"/></svg></button>
    </div>
    <div class="group"><i class="grip"></i>
      <button aria-label="Pan"><svg><use href="#pan"/></svg></button>
      <button aria-label="Rotate"><svg><use href="#rotate"/></svg></button>
      <button aria-label="Magnify"><svg><use href="#magnify"/></svg></button>
      <button aria-label="Box zoom"><svg><use href="#boxzoom"/></svg></button>
      <button aria-label="Auto-fit"><svg><use href="#fit"/></svg></button>
      <button aria-label="Cycle views"><svg><use href="#cycle"/></svg></button>
    </div>
    <div class="group"><i class="grip"></i>
      <button aria-label="Perspective off"><svg><use href="#parallel"/></svg></button>
      <button aria-label="Perspective on"><svg><use href="#perspective"/></svg></button>
    </div>
    <div class="group"><i class="grip"></i>
      <button aria-label="Select"><svg><use href="#cursor"/></svg></button>
      <span class="combo filter"><select aria-label="Selection filter"><option>All</option></select><i class="drop"></i></span>
      <button aria-label="Select behind"><svg><use href="#stack"/></svg></button>
      <i class="sep"></i>
      <button aria-label="Select entities"><svg><use href="#wirecubes"/></svg></button>
      <button aria-label="Drag shape"><svg><use href="#selbox"/></svg></button>
      <button aria-label="Drag limits"><svg><use href="#seldots"/></svg></button>
      <button class="on" aria-label="Highlight"><svg><use href="#solidcube"/></svg></button>
    </div>
    <div class="group"><i class="grip"></i>
      <button aria-label="Color code"><svg><use href="#palette"/></svg></button>
      <span class="combo colors"><select aria-label="Color mapping"><option>Assembly defaults</option></select><i class="drop"></i></span>
      <button aria-label="Translucency"><svg><use href="#tancube"/></svg></button>
      <button class="tiny" aria-label="Translucency options"><i class="tri"></i></button>
    </div>
    <div class="group gap-a"><i class="grip"></i>
      <button aria-label="Query information"><svg><use href="#info"/></svg></button>
    </div>
    <div class="group"><i class="grip"></i>
      <button aria-label="Show native mesh"><svg><use href="#meshcube"/></svg></button>
      <button aria-label="Show nodes"><svg><use href="#nodecube"/></svg></button>
      <button aria-label="Show geometry"><svg><use href="#greencube"/></svg></button>
    </div>
    <div class="group"><i class="grip"></i>
      <button aria-label="Wireframe"><svg><use href="#wirecube"/></svg></button>
      <button aria-label="Hidden"><svg><use href="#hidcube"/></svg></button>
      <button aria-label="Shaded"><svg><use href="#goldcube"/></svg></button>
    </div>
  </div>

  <div class="toolbar second">
    <div class="group">
      <svg class="cuticon"><use href="#vcut"/></svg>
      <button aria-label="Back view"><svg><use href="#v1"/></svg></button>
      <button aria-label="Top view"><svg><use href="#v2"/></svg></button>
      <button aria-label="Bottom view"><svg><use href="#v3"/></svg></button>
      <button aria-label="Left view"><svg><use href="#v4"/></svg></button>
      <button aria-label="Right view"><svg><use href="#v5"/></svg></button>
      <button aria-label="Iso view"><svg><use href="#v6"/></svg></button>
      <button class="num">1</button>
      <button class="num">2</button>
      <button class="num">3</button>
      <button class="num">4</button>
      <button aria-label="Specify view"><svg><use href="#vrot"/></svg></button>
    </div>
    <div class="group"><i class="grip"></i>
      <button aria-label="Single viewport"><svg><use href="#win"/></svg></button>
      <button aria-label="Cascade"><svg><use href="#wincasc"/></svg></button>
      <button aria-label="Tile horizontally"><svg><use href="#winhor"/></svg></button>
      <button aria-label="Tile vertically"><svg><use href="#winver"/></svg></button>
      <button aria-label="Link viewports"><svg><use href="#winlink"/></svg></button>
      <i class="sep"></i>
      <button aria-label="Edit annotation"><svg><use href="#textarrow"/></svg></button>
      <button aria-label="Arrow"><svg><use href="#arrow"/></svg></button>
      <button aria-label="Text"><svg><use href="#text"/></svg></button>
      <button aria-label="Pick annotation"><svg><use href="#cursor"/></svg></button>
      <button aria-label="Annotation manager"><svg><use href="#manager"/></svg></button>
      <button aria-label="Annotation options"><svg><use href="#list"/></svg></button>
    </div>
    <div class="group gap-b"><i class="grip"></i>
      <button aria-label="View cut"><svg><use href="#partcut"/></svg></button>
      <button aria-label="View cut manager"><svg><use href="#manager"/></svg></button>
    </div>
    <div class="group gap-c"><i class="grip"></i>
      <button aria-label="Replace selected"><svg><use href="#unite"/></svg></button>
      <button aria-label="Remove selected"><svg><use href="#subtract"/></svg></button>
      <button aria-label="Replace all"><svg><use href="#disk"/></svg></button>
      <button aria-label="Invert"><svg><use href="#swap"/></svg></button>
      <button aria-label="Undo"><svg><use href="#undo"/></svg></button>
      <button aria-label="Redo"><svg><use href="#redo"/></svg></button>
      <button aria-label="Create display group"><svg><use href="#parts3"/></svg></button>
      <button aria-label="Display group manager"><svg><use href="#manager"/></svg></button>
    </div>
  </div>

  <div class="workspace">
    <aside class="sidebar">
      <div class="tabs">
        <button class="active">del</button>
        <button>Results</button>
      </div>
      <div class="panel">
        <div class="dbrow">
          <span class="combo db"><select aria-label="Database"><option>Model Database</option></select><i class="drop"></i></span>
          <span class="updown"><i></i><i></i></span>
          <button aria-label="Up one level"><svg><use href="#folderup"/></svg></button>
          <button aria-label="Set as root"><svg><use href="#nodes"/></svg></button>
          <button aria-label="Tips"><svg><use href="#bulb"/></svg></button>
        </div>
        <div class="treebox">
          <ul class="tree">
            <li><div class="row"><svg class="cut"><use href="#t-db"/></svg>Models (1)</div></li>
            <li><div class="row current"><i class="toggle half"></i><span>Model-1</span></div>
              <ul class="branch">
                <li class="row"><i class="toggle"></i><svg><use href="#t-part"/></svg>Parts (1)</li>
                <li class="row"><i class="toggle"></i><svg><use href="#t-mat"/></svg>Materials (1)</li>
                <li class="row"><i class="stub"></i><svg><use href="#t-cal"/></svg>Calibrations</li>
                <li class="row"><i class="toggle"></i><svg><use href="#t-sec"/></svg>Sections (1)</li>
                <li class="row"><i class="stub"></i><svg><use href="#t-prof"/></svg>Profiles</li>
                <li class="row"><i class="toggle"></i><svg><use href="#t-asm"/></svg>Assembly</li>
                <li class="row"><i class="toggle"></i><svg><use href="#t-step"/></svg>Steps (2)</li>
                <li class="row"><i class="toggle"></i><svg><use href="#t-fout"/></svg>Field Output Requests (1)</li>
                <li class="row"><i class="toggle"></i><svg><use href="#t-hout"/></svg>History Output Requests (1)</li>
                <li class="row"><i class="stub"></i><svg><use href="#t-time"/></svg>Time Points</li>
                <li class="row"><i class="stub"></i><svg><use href="#t-ale"/></svg>ALE Adaptive Mesh Constraints</li>
                <li class="row"><i class="stub"></i><svg><use href="#t-int"/></svg>Interactions</li>
                <li class="row"><i class="stub"></i><svg><use href="#t-intp"/></svg>Interaction Properties</li>
                <li class="row"><i class="stub"></i><svg><use href="#t-cc"/></svg>Contact Controls</li>
                <li class="row"><i class="stub"></i><svg><use href="#t-ci"/></svg>Contact Initializations</li>
                <li class="row"><i class="stub"></i><svg><use href="#t-cs"/></svg>Contact Stabilizations</li>
                <li class="row"><i class="stub"></i><svg><use href="#t-con"/></svg>Constraints</li>
                <li class="row"><i class="stub"></i><svg><use href="#t-csec"/></svg>Connector Sections</li>
                <li class="row"><i class="toggle"></i><svg><use href="#t-field"/></svg>Fields</li>
                <li class="row"><i class="stub"></i><svg><use href="#t-amp"/></svg>Amplitudes</li>
                <li class="row"><i class="stub"></i><svg><use href="#t-load"/></svg>Loads</li>
                <li class="row"><i class="stub"></i><svg><use href="#t-bc"/></svg>BCs</li>
                <li class="row"><i class="stub"></i><svg><use href="#t-pf"/></svg>Predefined Fields</li>
                <li class="row"><i class="stub"></i><svg><use href="#t-rem"/></svg>Remeshing Rules</li>
                <li class="row"><i class="stub"></i><svg><use href="#t-opt"/></svg>Optimization Tasks</li>
                <li class="row"><i class="stub"></i><svg><use href="#t-sk"/></svg>Sketches</li>
              </ul>
            </li>
            <li><div class="row"><svg class="cut"><use href="#t-ann"/></svg>Annotations</div></li>
            <li><div class="row"><svg class="cut"><use href="#t-ana"/></svg>Analysis</div>
              <ul class="jobs">
                <li class="row"><svg><use href="#t-job"/></svg>Jobs</li>
                <li class="row"><svg><use href="#t-adp"/></svg>Adaptivity Processes</li>
              </ul>
            </li>
          </ul>
          <div class="vscroll"><i class="up"></i><div class="thumb"><i></i></div><i class="down"></i></div>
        </div>
        <div class="hscroll"><div class="thumb"><i></i></div><i class="right"></i></div>
      </div>
    </aside>

    <main class="work">
      <div class="context">
        <label for="module">Module:</label>
        <span class="combo module"><i class="spin"></i><select id="module"><option>Load</option></select><i class="drop"></i></span>
        <label for="model">Model:</label>
        <span class="combo model"><i class="spin"></i><select id="model"><option>Model-1</option></select><i class="drop"></i></span>
        <label for="step">Step:</label>
        <span class="combo step"><i class="spin"></i><select id="step"><option>Step-Static</option></select><i class="drop"></i></span>
      </div>

      <div class="stage">
        <div class="toolbox">
          <div class="set tall">
            <button aria-label="Create load"><svg><use href="#tload"/></svg></button>
            <button aria-label="Load manager"><svg><use href="#manager"/></svg></button>
            <button aria-label="Create boundary condition"><svg><use href="#tbc"/></svg></button>
            <button aria-label="Boundary condition manager"><svg><use href="#manager"/></svg></button>
            <button aria-label="Create predefined field"><svg><use href="#tfield"/></svg></button>
            <button aria-label="Predefined field manager"><svg><use href="#manager"/></svg></button>
            <button aria-label="Create load case"><svg><use href="#tcase"/></svg></button>
            <button aria-label="Load case manager"><svg><use href="#manager"/></svg></button>
          </div>
          <div class="set">
            <button aria-label="Create geometry"><svg><use href="#tpart"/></svg></button>
            <button aria-label="Translate geometry"><svg><use href="#tmove"/></svg></button>
            <button aria-label="Delete feature"><svg><use href="#terase"/></svg></button>
          </div>
          <div class="set">
            <button aria-label="Partition edge"><svg><use href="#tpick"/></svg></button>
            <button aria-label="Partition face"><svg><use href="#thole"/></svg></button>
            <button aria-label="Partition cell"><svg><use href="#tfill"/></svg></button>
            <button aria-label="Repair"><svg><use href="#tcut"/></svg></button>
          </div>
          <div class="set">
            <button aria-label="Datum point"><svg><use href="#txyz"/></svg></button>
            <button aria-label="Datum axis"><svg><use href="#ttriad"/></svg></button>
            <button aria-label="Datum plane"><svg><use href="#tplane"/></svg></button>
            <button aria-label="Datum csys"><svg><use href="#tcsys"/></svg></button>
          </div>
        </div>

        <div class="viewport">
          <svg class="scene" viewBox="319 138 1300 694" role="img" aria-label="Revolved shell part">
            <defs>
              <linearGradient id="dome"><stop offset="0" stop-color="#1c8af8"/><stop offset=".3" stop-color="#1a80e8"/><stop offset=".55" stop-color="#1872d0"/><stop offset="1" stop-color="#125ca6"/></linearGradient>
              <linearGradient id="domeTop" x1="0" y1="0" x2="0" y2="1"><stop offset="0" stop-color="#1c7fe4"/><stop offset=".6" stop-color="#1a78da" stop-opacity="0"/></linearGradient>
              <linearGradient id="body"><stop offset="0" stop-color="#1b80e6"/><stop offset=".2" stop-color="#1b7ce0"/><stop offset=".45" stop-color="#1668bd"/><stop offset="1" stop-color="#0f5296"/></linearGradient>
              <linearGradient id="fillet"><stop offset="0" stop-color="#1c84ec"/><stop offset=".6" stop-color="#1a76d4"/><stop offset="1" stop-color="#135ca6"/></linearGradient>
              <linearGradient id="rim"><stop offset="0" stop-color="#1866b8"/><stop offset=".2" stop-color="#1a76d6"/><stop offset=".5" stop-color="#1768bd"/><stop offset=".75" stop-color="#1764b6"/><stop offset="1" stop-color="#0e4885"/></linearGradient>
              <radialGradient id="shine"><stop offset="0" stop-color="#58beff"/><stop offset=".35" stop-color="#46acfc" stop-opacity=".75"/><stop offset=".7" stop-color="#3098f4" stop-opacity=".25"/><stop offset="1" stop-color="#2a90f0" stop-opacity="0"/></radialGradient>
              <clipPath id="domeClip"><path d="M984 199L955 215L926 241L903 275L883 317L873 357L871 395L903 408L942 417L984 419L1028 416L1066 407L1098 395L1096 357L1085 315L1066 275L1043 242L1012 213z"/></clipPath>
              <clipPath id="filletClip"><path d="M881 570Q925 597 984 597T1088 570Q1087 592 1107 606Q1060 640 984 640T861 606Q882 592 881 570z"/></clipPath>
            </defs>
            <g stroke="#0b1c3c" stroke-width="1.3" stroke-linejoin="round">
              <path fill="url(#rim)" d="M815 633L817 656L850 677L893 693L935 702L985 706L1033 702L1080 692L1122 674L1153 656L1154 634L985 620z"/>
              <path fill="#1a7fe6" d="M861 606L815 633L832 645L850 654L893 670L935 679L985 683L1033 679L1080 669L1120 654L1138 645L1154 634L1107 606z"/>
              <path fill="url(#fillet)" d="M881 570Q882 592 861 606Q915 640 984 641Q1055 639 1107 606Q1087 592 1088 570z"/>
              <g clip-path="url(#filletClip)" stroke="none" fill="url(#shine)">
                <ellipse cx="900" cy="586" rx="54" ry="12" transform="rotate(22 900 586)"/>
                <ellipse cx="884" cy="604" rx="50" ry="12" transform="rotate(26 884 604)"/>
                <ellipse cx="1010" cy="618" rx="54" ry="12" transform="rotate(-10 1010 618)"/>
              </g>
              <path fill="url(#body)" d="M871 395L873 430L878 510L881 570Q927 597 984 597Q1042 597 1088 570L1092 500L1096 430L1098 395z"/>
              <path fill="url(#dome)" d="M984 199L955 215L926 241L903 275L883 317L873 357L871 395L903 408L942 417L984 419L1028 416L1066 407L1098 395L1096 357L1085 315L1066 275L1043 242L1012 213z"/>
            </g>
            <g clip-path="url(#domeClip)" fill="url(#shine)">
              <path d="M860 190h250v240h-250z" fill="url(#domeTop)"/>
              <ellipse cx="1008" cy="298" rx="58" ry="34"/>
              <ellipse cx="896" cy="374" rx="46" ry="46"/>
              <ellipse cx="922" cy="252" rx="32" ry="32" opacity=".7"/>
            </g>
            <path d="M984.5 155V582" stroke="#d9ee66" stroke-width="2.5" stroke-dasharray="2 4.5 5 4.5"/>
            <path d="M984 513V552L950 573M984 552L1019 573" fill="none" stroke="#c8f070" stroke-width="1.3"/>
            <g fill="#d9ee66" font-family="Liberation Mono, monospace" font-size="13">
              <text x="984" y="509">Y</text><text x="1023" y="578">X</text><text x="945" y="578">Z</text>
            </g>
          </svg>

          <svg class="compass" width="66" height="76" viewBox="1541 152 66 76">
            <g fill="#155a68" stroke="#c9d2f2" stroke-width="2" stroke-linejoin="round">
              <path d="M1574 172Q1558 180 1555 205L1574 195L1594 205Q1590 180 1574 172z"/>
              <path d="M1574 201L1553 213Q1558 225 1574 225T1595 213z"/>
            </g>
            <path d="M1574 166V212" stroke="#c9d2f2" stroke-width="2"/>
            <circle cx="1574" cy="166" r="3" fill="#d5daf5"/><circle cx="1574" cy="212" r="4" fill="#c4141c"/>
            <g class="lbl"><text x="1571" y="161">Y</text><text x="1547" y="212">Z</text><text x="1596" y="212">X</text></g>
          </svg>

          <svg class="triad" width="92" height="80" viewBox="382 718 92 80">
            <path d="M426 770V748" stroke="#12a012" stroke-width="4"/><path d="M426 735L433 751Q426 755 419 751z" fill="#16b016"/>
            <path d="M426 770L406 781" stroke="#1414a8" stroke-width="5"/><path d="M397 786L405 774L413 785z" fill="#1010d0"/>
            <path d="M426 770L444 780" stroke="#a01414" stroke-width="5"/><path d="M456 786L439 785L447 773z" fill="#d01414"/>
            <g class="lbl white"><text x="423" y="729">Y</text><text x="385" y="794">Z</text><text x="460" y="794">X</text></g>
          </svg>

          <svg class="pointer" width="14" height="20"><path d="M1 1V16L5 13L8 19L11 18L8 12H13z" fill="#fff" stroke="#223"/></svg>
        </div>
      </div>

      <div class="brand">
        <svg width="22" height="24" viewBox="0 0 22 24" fill="none" stroke="#359087" stroke-width="1.8"><path d="M9 3Q15 0 14 4Q13 8 7 9Q13 10 11 14Q8 19 3 19L6 12M3 18L1 22M21 10Q14 9 14 12Q18 14 18 16Q17 19 11 19"/></svg>
        <span>SIMU</span>
      </div>
    </main>
  </div>

  <section class="messages">
    <div class="switch"><button aria-label="Command line"></button></div>
    <pre>A new model database has been created.
The model "Model-1" has been created.
6 vertices have been merged.</pre>
  </section>
  <footer class="edge"></footer>
</div>
</body>
</html>
```

FILE: styles.css
```css
:root {
  --line: #9a9a9a;
  --ui: "Noto Sans CJK SC", "Open Sans", sans-serif;
}
* { box-sizing: border-box; }
body {
  margin: 0;
  font-family: var(--ui);
  font-size: 13px;
  color: #1c1c1c;
  background: #fdfdfd;
}
button, select {
  font: inherit;
  color: inherit;
  border: none;
  background: none;
  padding: 0;
  margin: 0;
}
ul { list-style: none; margin: 0; padding: 0; }
.sprite { position: absolute; width: 0; height: 0; }
.icons { display: none; }
.axis { fill: none; stroke: #1d3575; stroke-width: 2; marker-start: url(#mBlue); marker-end: url(#mBlue); }
.axis.end { marker-start: none; }
.axl { font-family: "Liberation Sans", sans-serif; font-size: 8px; fill: #b02a2a; }
.serif { font-family: "Liberation Serif", serif; font-weight: bold; fill: #8a1c1c; }
.part { fill: #b9bfdc; stroke: #4a4a66; }
.gold { fill: #ecc765; stroke: #8a6a24; }

.app {
  display: flex;
  flex-direction: column;
  height: 100vh;
  overflow: hidden;
}

/* title */
.titlebar {
  display: flex;
  flex: none;
  justify-content: space-between;
  height: 22px;
  background: linear-gradient(90deg, #8fa2c8 0, #8098c4 150px, #2c5293 210px, #1e4684 30%, #2a5292 45%, #1d4583 60%, #35599a 90%, #24477f 100%);
  border-bottom: 2px solid #1a2f6c;
}
.titlebar h1 {
  margin: 0;
  font-size: 13px;
  font-weight: normal;
  line-height: 20px;
  white-space: nowrap;
  color: #101828;
}
.winbtns { display: flex; height: 18px; border: 1px solid #24365c; border-top: 0; border-right: 0; border-radius: 0 0 0 4px; overflow: hidden; }
.winbtns button {
  width: 28px;
  border-right: 1px solid #24365c;
  background: linear-gradient(#a9b8d4 0, #8496bc 45%, #4f6696 50%, #8ba0c6 100%);
}
.winbtns .close { width: 19px; border: 0; background: linear-gradient(#dc9a8c 0, #c95f4c 45%, #b02c18 50%, #cf5a38 100%); }
.winbtns svg { display: block; margin: 3px auto 0; }

/* menu */
.menubar {
  display: flex;
  flex: none;
  gap: 16px;
  height: 27px;
  background: linear-gradient(90deg, #fdfdfd, #f0f2f2);
  border-bottom: 1px solid var(--line);
}
.menubar > button { white-space: nowrap; }
.menubar u { text-underline-offset: 2px; }
.menubar svg { display: block; }
.mdi { display: flex; gap: 6px; align-items: center; margin-left: auto; }
.mdi button { border: 1px solid #9fb2c6; background: #eaf1f8; }
.mdi .cut { border-right: 0; }

/* toolbars */
.toolbar {
  display: flex;
  flex: none;
  height: 28px;
  background: linear-gradient(90deg, #fcfcfc, #eff1f2 60%);
}
.group {
  display: flex;
  flex: none;
  align-items: center;
  background: #f6f6f6;
  border-right: 1px solid #b4b4b4;
  border-bottom: 1px solid #b4b4b4;
}
.group.first { padding-left: 4px; }
.group button { width: 26px; height: 26px; }
.group button svg { display: block; width: 24px; height: 24px; margin: 1px; }
.group .on { background: #c4ccd8; border: 1px solid #667; border-radius: 3px; }
.group .on svg { margin: 0; }
.group .tiny { width: 12px; }
.group .num { font: bold 18px "Liberation Sans", sans-serif; color: #bb2424; }
.cuticon { width: 4px; height: 24px; }
.gap-a { margin-left: 114px; }
.gap-b { margin-left: 32px; }
.gap-c { margin-left: 243px; }
.grip {
  width: 8px;
  height: 16px;
  background: repeating-linear-gradient(#999 0 2px, transparent 2px 4px) 4px 0 / 2px 16px no-repeat;
}
.sep { width: 1px; height: 18px; margin-right: 1px; background: #999; }
.tri, .drop::after {
  display: block;
  width: 8px;
  content: "";
  border: 4px solid transparent;
  border-top: 5px solid #000;
  border-bottom: 0;
}

.combo {
  position: relative;
  display: flex;
  flex: none;
  height: 24px;
  border: 1px solid #777;
  background: #fff;
}
.combo select { flex: 1; min-width: 0; padding: 0 12px 0 3px; appearance: none; }
.drop {
  position: absolute;
  top: 0;
  right: 0;
  bottom: 0;
  display: flex;
  align-items: center;
  justify-content: center;
  width: 11px;
  border: 1px solid #666;
  background: linear-gradient(#fff, #d4d4d4);
  pointer-events: none;
}
.filter { width: 116px; border-color: #9ab; background: #b5cdea; }
.filter .drop { border-color: #b8b8b8; background: #eee; }
.filter .drop::after { border-top-color: #999; }
.colors { width: 144px; }
.spin {
  width: 10px;
  margin: 1px 0 1px 1px;
  border: 1px solid #aab;
  background:
    conic-gradient(from 135deg at 50% 0, #667 90deg, transparent 0) 50% 4px / 6px 3px no-repeat,
    conic-gradient(from -45deg at 50% 100%, #667 90deg, transparent 0) 50% 14px / 6px 3px no-repeat,
    #f4f4f8;
}

/* model tree */
.workspace { display: flex; flex: 1; min-height: 0; }
.sidebar {
  display: flex;
  flex-direction: column;
  flex: none;
  width: 252px;
  padding: 6px 0 5px;
}
.tabs { display: flex; align-items: flex-end; height: 25px; }
.tabs button { width: 56px; height: 23px; border: 1px solid var(--line); border-bottom: 0; background: linear-gradient(#f2f2f2, #dcdcdc); }
.tabs .active { width: 29px; height: 25px; padding-right: 10px; border-left: 0; background: #fdfdfd; }
.panel {
  display: flex;
  flex-direction: column;
  flex: 1;
  min-height: 0;
  border: 1px solid var(--line);
  border-left: 0;
}
.dbrow { display: flex; flex: none; align-items: center; height: 34px; border-bottom: 1px solid #bbb; }
.dbrow button svg { display: block; width: 18px; height: 18px; }
.dbrow button { margin-right: 8px; }
.dbrow button:last-child { margin: 0; }
.db { width: 155px; height: 23px; border-left: 0; }
.db select { padding-left: 0; }
.updown { display: flex; flex-direction: column; gap: 5px; margin: 0 8px 0 7px; }
.updown i { border: 5px solid transparent; border-top: 0; border-bottom: 5px solid #999; }
.updown i + i { border-top: 5px solid #999; border-bottom: 0; }
.treebox { display: flex; flex: 1; min-height: 0; }
.tree { flex: 1; overflow: hidden; }
.row { display: flex; align-items: center; height: 21px; white-space: nowrap; line-height: 19px; }
.row svg { flex: none; width: 16px; height: 16px; margin-right: 5px; }
.row .cut { width: 6px; margin-right: 6px; }
.current span { border-bottom: 2px solid #111; }
.toggle {
  flex: none;
  width: 9px;
  height: 9px;
  margin-right: 4px;
  border: 1px solid #888;
  background:
    linear-gradient(#333, #333) 50% / 5px 1px no-repeat,
    linear-gradient(#333, #333) 50% / 1px 5px no-repeat,
    #fff;
}
.toggle.half { width: 5px; margin-right: 5px; border-left: 0; background: linear-gradient(#333, #333) 0 50% / 3px 1px no-repeat; }
.stub { flex: none; width: 5px; margin: 0 4px; border-top: 1px dotted #999; }
.branch { padding-left: 14px; background: repeating-linear-gradient(#999 0 1px, transparent 1px 3px) 18px 0 / 1px 536px no-repeat; }
.jobs { padding-left: 8px; background: repeating-linear-gradient(#999 0 1px, transparent 1px 3px) 0 0 / 1px 100% no-repeat; }
.jobs svg { margin-right: 6px; }

.vscroll { display: flex; flex-direction: column; align-items: center; width: 16px; background: #f1f1f1; }
.vscroll .up, .vscroll .down { flex: none; margin: 7px 0; border: 4px solid transparent; border-top: 0; border-bottom: 4px solid #333; }
.vscroll .down { margin: 42px 0 8px; border-top: 4px solid #333; border-bottom: 0; }
.thumb { display: flex; align-items: center; justify-content: center; border: 1px solid #8c8c8c; border-radius: 1px; }
.vscroll .thumb { flex: 1; width: 15px; background: linear-gradient(90deg, #f4f4f4, #d8d8d8 60%, #bcbcbc); }
.vscroll .thumb i { width: 7px; height: 8px; background: repeating-linear-gradient(#555 0 1px, transparent 1px 3px); }
.hscroll { display: flex; flex: none; align-items: center; height: 16px; margin-right: 16px; background: #efefef; }
.hscroll .thumb { width: 202px; height: 16px; padding-right: 8px; border-left: 0; background: linear-gradient(#f2f2f2, #d8d8d8 60%, #bcbcbc); }
.hscroll .thumb i { width: 8px; height: 7px; background: repeating-linear-gradient(90deg, #555 0 1px, transparent 1px 3px); }
.right { margin-left: 22px; border: 4px solid transparent; border-right: 0; border-left: 4px solid #333; }

/* work area */
.work { display: flex; flex-direction: column; flex: 1; min-width: 0; margin-left: 5px; }
.context {
  display: flex;
  flex: none;
  align-items: center;
  height: 33px;
  padding: 0 0 1px 8px;
  background: linear-gradient(#fdfdfd, #ededed);
  border-bottom: 1px solid #555;
}
.context label { width: 53px; }
.context .combo + label { width: 45px; margin-left: 14px; }
.context .model + label { width: 33px; }
.module { width: 111px; }
.model { width: 98px; }
.step { width: 101px; }
.stage { display: flex; flex: 1; min-height: 0; }
.toolbox { flex: none; width: 62px; background: linear-gradient(90deg, #fafafa, #ececec); }
.set {
  display: grid;
  grid-template-columns: 28px 28px;
  grid-auto-rows: 28px;
  margin: 0 3px;
  padding-top: 6px;
  border-bottom: 1px solid #999;
}
.set.tall { grid-auto-rows: 33px; padding-top: 0; }
.set:last-child { border: 0; }
.set button { display: flex; align-items: center; justify-content: center; }
.set svg { width: 24px; height: 24px; font-family: "Liberation Sans", sans-serif; }

.viewport {
  position: relative;
  flex: 1;
  min-width: 0;
  overflow: hidden;
  background: linear-gradient(#1a2d48 0, #22334f 30%, #2a3a56 60%, #46546e 72%, #74829c 86%, #9ba9c4 100%);
}
.scene { display: block; width: 100%; height: 100%; }
.compass { position: absolute; top: 14px; right: 12px; }
.triad { position: absolute; left: 63px; bottom: 34px; }
.pointer { position: absolute; left: 55px; top: 107px; }
.lbl { font: bold 9px "Liberation Sans", sans-serif; fill: #d9ee66; }
.lbl.white { fill: #fff; }

.brand {
  display: flex;
  flex: none;
  justify-content: flex-end;
  align-items: center;
  gap: 8px;
  height: 38px;
  overflow: hidden;
  background: linear-gradient(#fdfdfd, #ececec);
  color: #359087;
}
.brand span { font: italic bold 16px "DejaVu Sans", sans-serif; }

/* message area */
.messages { display: flex; flex: none; height: 137px; border-top: 2px solid #909090; border-bottom: 1px solid var(--line); }
.switch { width: 9px; padding-top: 37px; border-right: 1px solid var(--line); }
.switch button { display: block; width: 8px; height: 35px; border: solid #999; border-width: 1px 0; background: linear-gradient(#222, #222) 3px 50% / 1px 23px no-repeat, linear-gradient(#e6dfa8, #e6dfa8) 0 50% / 3px 23px no-repeat, #ddd; }
.messages pre {
  flex: 1;
  margin: 0 0 0 2px;
  padding: 3px 4px;
  border-left: 1px solid var(--line);
  font: 13px/13px "Liberation Mono", monospace;
  color: #000;
}
.edge { flex: none; height: 5px; border-bottom: 2px solid #3a5240; }
```
